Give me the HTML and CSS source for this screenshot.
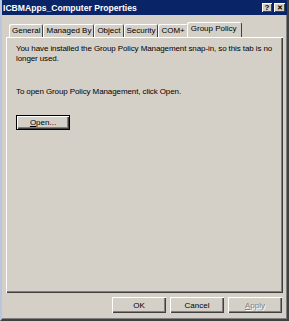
FILE: index.html
```html
<!DOCTYPE html>
<html>
<head>
<meta charset="utf-8">
<title>ICBMApps_Computer Properties</title>
<link rel="stylesheet" href="styles.css">
</head>
<body>

<div class="window">
	<div class="titlebar">
		<span class="title">ICBMApps_Computer Properties</span>
		<span class="cap-btn">?</span>
		<span class="cap-btn close">&#x2715;</span>
	</div>

	<div class="client">
		<!-- tabs -->
		<div class="tabs">
			<span class="tab">General</span>
			<span class="tab">Managed By</span>
			<span class="tab">Object</span>
			<span class="tab">Security</span>
			<span class="tab">COM+</span>
			<span class="tab active">Group Policy</span>
		</div>

		<div class="panel">
			<p class="note">You have installed the Group Policy Management snap-in, so this tab is no longer used.</p>
			<p class="note open-note">To open Group Policy Management, click Open.</p>
			<span class="btn default"><u>O</u>pen...</span>
		</div>

		<div class="buttons">
			<span class="btn">OK</span>
			<span class="btn">Cancel</span>
			<span class="btn disabled"><u>A</u>pply</span>
		</div>
	</div>
</div>

</body>
</html>
```

FILE: styles.css
```css
* {
font-family: "Liberation Sans", Arial, sans-serif;
}
body {
margin: 0;
background: #fff;
}
.window {
width: 289px;
height: 321px;
box-sizing: border-box;
background: #d4d0c8;
border-left: 2px solid #b9c6dd;
border-right: 2px solid #404040;
border-bottom: 2px solid #404040;
box-shadow: inset -1px -1px #808080;
display: flex;
flex-direction: column;
}
.titlebar {
height: 15px;
background: #0a2468;
color: #fff;
display: flex;
align-items: center;
padding: 0 2px 0 1px;
}
.title {
flex: 1;
font-size: 8.6px;
font-weight: bold;
}
.cap-btn {
width: 10px;
height: 9px;
margin-left: 2px;
background: #d4d0c8;
color: #000;
font-size: 8px;
font-weight: bold;
line-height: 9px;
text-align: center;
box-shadow: inset 1px 1px #fff, inset -1px -1px #404040;
}
.cap-btn.close {
width: 11px;
font-size: 7px;
}
.client {
flex: 1;
display: flex;
flex-direction: column;
padding: 7px 3px 3px 4px;
}
.tabs {
display: flex;
align-items: flex-end;
height: 15px;
padding-left: 3px;
}
.tab {
font-size: 8px;
height: 13px;
line-height: 13px;
padding: 0 3px;
color: #000;
box-shadow: inset 1px 1px #fff, inset -1px 0 #404040;
border-radius: 2px 2px 0 0;
}
.tab.active {
height: 15px;
line-height: 14px;
margin: 0 -2px 0 -1px;
padding: 0 5px 0 4px;
background: #d4d0c8;
position: relative;
z-index: 1;
}
.panel {
height: 256px;
box-sizing: border-box;
width: 277px;
padding: 7px 8px 0 10px;
box-shadow: inset 1px 1px #fff, inset -1px -1px #404040, inset -2px -2px #808080;
}
.note {
font-size: 8px;
letter-spacing: -0.1px;
line-height: 10px;
margin: 0;
width: 262px;
}
.open-note {
margin-top: 23px;
}
.btn {
display: inline-flex;
align-items: center;
justify-content: center;
width: 54px;
height: 16px;
box-sizing: border-box;
font-size: 8px;
background: #d4d0c8;
box-shadow: inset 1px 1px #fff, inset -1px -1px #404040, inset -2px -2px #808080;
}
.btn u {
text-decoration: underline;
}
.btn.default {
margin-top: 18px;
border: 1px solid #000;
height: 15px;
}
.btn.disabled {
color: #808080;
text-shadow: 1px 1px #fff;
}
.buttons {
display: flex;
justify-content: flex-end;
gap: 4px;
padding: 4px 2px 0 0;
}
```
